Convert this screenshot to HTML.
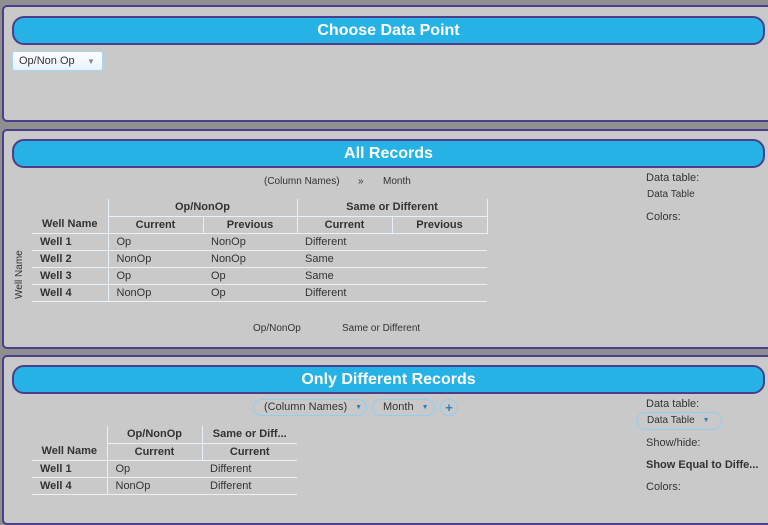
<!DOCTYPE html>
<html><head><meta charset="utf-8"><style>
*{box-sizing:border-box;margin:0;padding:0}
body{width:768px;height:513px;overflow:hidden;background:#8f8f8f;font-family:"Liberation Sans",Arial,sans-serif;color:#333;position:relative}
.panel{position:absolute;left:2px;width:790px;background:#c9c9c9;border:2px solid #4b3f8c;border-radius:5px}
.hdr{position:absolute;left:8px;width:753px;height:29px;background:#27b2e6;border:2px solid #4b3f8c;border-radius:12px;color:#fff;font-weight:bold;font-size:16px;text-align:center;line-height:26px}
.abs{position:absolute;font-size:11px;white-space:nowrap}
table{position:absolute;border-collapse:collapse;font-size:11px;table-layout:fixed}
td,th{height:17px;padding:0 8px;white-space:nowrap;border-bottom:1px solid #e8f0f8;overflow:hidden}
th{font-weight:bold;text-align:center;color:#333}
.b{font-weight:bold;text-align:left}
.vl{border-left:1px solid #e8f0f8}
.pill{position:absolute;height:17px;border:1px solid #8fcfee;border-radius:9px;font-size:11px;line-height:15px;padding:0 0 0 10px;color:#333}
.arr{color:#2a7fc0;font-size:7px;margin-left:8px;vertical-align:1px}
</style></head><body>
<div class="panel" style="top:5px;height:117px">
 <div class="hdr" style="top:9px">Choose Data Point</div>
 <div style="position:absolute;left:8px;top:44px;width:91px;height:20px;background:linear-gradient(#fff,#e6f2fb);border:1px solid #a9d7f2;border-radius:3px;font-size:11px;line-height:18px;padding-left:6px;color:#333">Op/Non Op<span style="position:absolute;left:74px;top:1px;font-size:8px;color:#888">▼</span></div>
</div>
<div class="panel" style="top:129px;height:220px">
 <div class="hdr" style="top:8px">All Records</div>
 <div class="abs" style="left:260px;top:45px;font-size:10px">(Column Names)</div>
 <div class="abs" style="left:354px;top:45px;font-size:10px">»</div>
 <div class="abs" style="left:379px;top:45px;font-size:10px">Month</div>
 <div class="abs" style="left:642px;top:41px">Data table:</div>
 <div class="abs" style="left:643px;top:58px;font-size:10px">Data Table</div>
 <div class="abs" style="left:642px;top:80px">Colors:</div>
 <div class="abs" style="left:10px;top:168px;transform:rotate(-90deg);transform-origin:0 0;font-size:10px">Well Name</div>
 <table style="left:28px;top:68px;width:455px">
  <colgroup><col style="width:76px"><col style="width:95px"><col style="width:94px"><col style="width:95px"><col style="width:95px"></colgroup>
  <tr><th style="border-bottom:none"></th><th colspan="2" class="vl">Op/NonOp</th><th colspan="2" class="vl" style="border-right:1px solid #e8f0f8">Same or Different</th></tr>
  <tr><th>Well Name</th><th class="vl">Current</th><th class="vl">Previous</th><th class="vl">Current</th><th class="vl" style="border-right:1px solid #e8f0f8">Previous</th></tr>
  <tr><td class="b">Well 1</td><td class="vl">Op</td><td>NonOp</td><td>Different</td><td></td></tr>
  <tr><td class="b">Well 2</td><td class="vl">NonOp</td><td>NonOp</td><td>Same</td><td></td></tr>
  <tr><td class="b">Well 3</td><td class="vl">Op</td><td>Op</td><td>Same</td><td></td></tr>
  <tr><td class="b">Well 4</td><td class="vl">NonOp</td><td>Op</td><td>Different</td><td></td></tr>
 </table>
 <div class="abs" style="left:249px;top:192px;font-size:10px">Op/NonOp</div>
 <div class="abs" style="left:338px;top:192px;font-size:10px">Same or Different</div>
</div>
<div class="panel" style="top:355px;height:170px">
 <div class="hdr" style="top:8px">Only Different Records</div>
 <div class="pill" style="left:249px;top:42px;width:114px">(Column Names)<span class="arr">▼</span></div>
 <div class="pill" style="left:368px;top:42px;width:63px">Month<span class="arr">▼</span></div>
 <div class="pill" style="left:436px;top:42px;width:18px;padding:0;text-align:center;color:#2a7fc0;font-weight:bold;font-size:13px">+</div>
 <div class="abs" style="left:642px;top:41px">Data table:</div>
 <div class="pill" style="left:632px;top:55px;width:86px;height:18px;font-size:10px">Data Table<span class="arr">▼</span></div>
 <div class="abs" style="left:642px;top:80px">Show/hide:</div>
 <div class="abs" style="left:642px;top:102px;font-weight:bold">Show Equal to Diffe...</div>
 <div class="abs" style="left:642px;top:124px">Colors:</div>
 <table style="left:28px;top:69px;width:265px">
  <colgroup><col style="width:75px"><col style="width:95px"><col style="width:95px"></colgroup>
  <tr><th style="border-bottom:none"></th><th class="vl">Op/NonOp</th><th class="vl">Same or Diff...</th></tr>
  <tr><th>Well Name</th><th class="vl">Current</th><th class="vl">Current</th></tr>
  <tr><td class="b">Well 1</td><td class="vl">Op</td><td>Different</td></tr>
  <tr><td class="b">Well 4</td><td class="vl">NonOp</td><td>Different</td></tr>
 </table>
</div>
</body></html>
